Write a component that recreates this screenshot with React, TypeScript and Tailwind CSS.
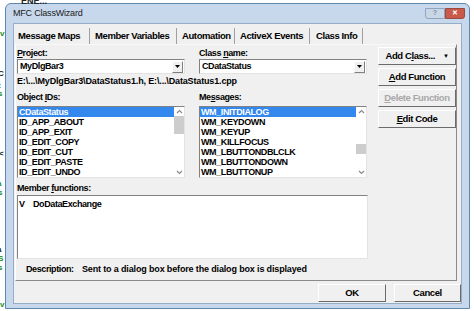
import React from "react";

const font = "font-['Liberation_Sans',Arial,sans-serif]";

const objectIds = ["CDataStatus", "ID_APP_ABOUT", "ID_APP_EXIT", "ID_EDIT_COPY", "ID_EDIT_CUT", "ID_EDIT_PASTE", "ID_EDIT_UNDO"];
const messages = ["WM_INITDIALOG", "WM_KEYDOWN", "WM_KEYUP", "WM_KILLFOCUS", "WM_LBUTTONDBLCLK", "WM_LBUTTONDOWN", "WM_LBUTTONUP"];

const Chevron = ({ up }: { up?: boolean }) => (
  <svg width="7" height="5" viewBox="0 0 7 5">
    <polyline points={up ? "1,4 3.5,1.5 6,4" : "1,1 3.5,3.5 6,1"} fill="none" stroke="#8a8a8a" strokeWidth="1.2" />
  </svg>
);

const ListBox = ({ items, thumbTop, thumbH }: { items: string[]; thumbTop: number; thumbH: number }) => (
  <div className="h-[72px] flex bg-white border border-t-[#828282] border-l-[#828282] border-r-[#e3e3e3] border-b-[#e3e3e3]">
    <div className="flex-1 flex flex-col">
      {items.map((it, i) => (
        <div
          key={it}
          className={`h-[10px] leading-[10px] pl-[1px] text-[9px] tracking-[-0.4px] font-bold whitespace-nowrap ${i === 0 ? "bg-[#3388ee] text-white" : "text-black"}`}
        >
          {it}
        </div>
      ))}
    </div>
    <div className="w-[10px] flex flex-col items-center bg-white">
      <div className="h-[9px] flex items-center justify-center">
        <Chevron up />
      </div>
      <div className="flex-1 w-full flex flex-col">
        <div style={{ height: thumbTop }} />
        <div className="w-full bg-[#cdcdcd]" style={{ height: thumbH }} />
      </div>
      <div className="h-[9px] flex items-center justify-center">
        <Chevron />
      </div>
    </div>
  </div>
);

const Combo = ({ value }: { value: string }) => (
  <div className="h-[15px] flex items-center bg-white border border-t-[#828282] border-l-[#828282] border-r-[#e3e3e3] border-b-[#e3e3e3]">
    <div className="flex-1 pl-[2px] text-[9px] tracking-[-0.4px] font-bold leading-[13px] text-black whitespace-nowrap">{value}</div>
    <div className="w-[11px] h-[12px] mr-[1px] flex items-center justify-center border border-t-white border-l-white border-r-[#808080] border-b-[#808080] bg-[#f0f0f0]">
      <svg width="5" height="3" viewBox="0 0 5 3">
        <polygon points="0,0 5,0 2.5,3" fill="#000" />
      </svg>
    </div>
  </div>
);

const Btn = ({ children, disabled }: { children: React.ReactNode; disabled?: boolean }) => (
  <div
    className={`h-[18px] flex items-center justify-center whitespace-nowrap text-[9.5px] tracking-[-0.4px] font-bold border border-t-white border-l-white border-r-[#6b6b6b] border-b-[#6b6b6b] bg-[#f0f0f0] ${disabled ? "text-[#a8a8a8]" : "text-black"}`}
  >
    {children}
  </div>
);

const Label = ({ children, className = "" }: { children: React.ReactNode; className?: string }) => (
  <div className={`h-[11px] leading-[11px] text-[9px] tracking-[-0.4px] font-bold text-black whitespace-nowrap ${className}`}>{children}</div>
);

export default function App() {
  return (
    <div className={`w-[474px] h-[311px] bg-white flex overflow-hidden relative ${font}`}>
      {/* editor text peeking out behind the dialog */}
      <div className="w-[5px] relative overflow-hidden text-[8px] font-bold leading-[8px]">
        <span className="absolute left-[0px] top-[30px] text-[#1f8a1f]">v</span>
        <span className="absolute left-[-2px] top-[70px] text-[#222]">C</span>
        <span className="absolute left-[-2px] top-[82px] text-[#1f8a1f]">t</span>
        <span className="absolute left-[-2px] top-[90px] text-[#1f8a1f]">s</span>
        <span className="absolute left-[-1px] top-[150px] text-[#222]">&lt;</span>
        <span className="absolute left-[-3px] top-[180px] text-[#1f8a1f]">a</span>
        <span className="absolute left-[-2px] top-[189px] text-[#1f8a1f]">s</span>
        <span className="absolute left-[-3px] top-[246px] text-[#222]">a</span>
        <span className="absolute left-[-2px] top-[255px] text-[#1f8a1f]">S</span>
        <span className="absolute left-[-2px] top-[264px] text-[#1f8a1f]">s</span>
        <span className="absolute left-[0px] top-[301px] text-[#1f8a1f]">v</span>
      </div>

      <div className="relative w-[465px]">
        <span className="absolute left-[16px] top-[-5px] text-[9px] font-bold text-[#222]">ENE...</span>
        <div className="mt-[3px] h-[306px] flex flex-col rounded-t-[6px] border border-[#5f86ad] bg-[#c7d8ec] px-[7px] pb-[4px]">
          {/* title bar */}
          <div className="h-[19px] flex items-center">
            <div className="flex-1 text-[9px] tracking-[-0.2px] text-[#1a1a1a]">MFC ClassWizard</div>
            <div className="w-[20px] h-[11px] flex items-center justify-center rounded-bl-[3px] border border-[#8ea4bf] bg-[#c9d6e6] text-[7px] font-bold text-[#7d8ea5]">
              ?
            </div>
            <div className="w-[20px] h-[11px] mr-[-3px] flex items-center justify-center rounded-br-[3px] border border-[#9b4a3d] bg-[#c9594a] text-[7px] font-bold text-white">
              ✕
            </div>
          </div>

          {/* client area */}
          <div className="flex-1 flex flex-col bg-[#f0f0f0] border border-[#97acc6]">
            {/* tabs */}
            <div className="h-[20px] flex items-end text-[9.5px] tracking-[-0.4px] font-bold text-black whitespace-nowrap">
              <div className="w-[76px] h-[16px] pl-[4px] leading-[16px] border-r border-[#a0a0a0]">Message Maps</div>
              <div className="w-[87px] h-[16px] pl-[5px] leading-[16px] border-r border-[#a0a0a0]">Member Variables</div>
              <div className="w-[58px] h-[16px] pl-[5px] leading-[16px] border-r border-[#a0a0a0]">Automation</div>
              <div className="w-[75px] h-[16px] pl-[5px] leading-[16px] border-r border-[#a0a0a0]">ActiveX Events</div>
              <div className="w-[53px] h-[16px] pl-[6px] leading-[16px] border-r border-[#a0a0a0]">Class Info</div>
            </div>

            {/* tab page */}
            <div className="ml-[1px] mr-[4px] h-[237px] flex border-l border-l-white border-r border-r-[#8a8a8a] border-b border-b-[#8a8a8a] border-t border-t-[#f8f8f8]">
              <div className="w-[351px] ml-[1px] flex flex-col pt-[3px]">
                <div className="grid grid-cols-[168px_168px] gap-x-[14px]">
                  <div>
                    <Label>
                      <u>P</u>roject:
                    </Label>
                    <Combo value="MyDlgBar3" />
                  </div>
                  <div>
                    <Label>
                      Class <u>n</u>ame:
                    </Label>
                    <Combo value="CDataStatus" />
                  </div>
                </div>
                <div className="mt-[2px] h-[11px] leading-[11px] text-[9px] tracking-[-0.15px] font-bold text-black whitespace-nowrap">
                  E:\...\MyDlgBar3\DataStatus1.h, E:\...\DataStatus1.cpp
                </div>
                <div className="mt-[5px] grid grid-cols-[168px_168px] gap-x-[14px]">
                  <div>
                    <Label className="mb-[3px]">
                      Object <u>I</u>Ds:
                    </Label>
                    <ListBox items={objectIds} thumbTop={0} thumbH={18} />
                  </div>
                  <div>
                    <Label className="mb-[3px]">
                      Me<u>s</u>sages:
                    </Label>
                    <ListBox items={messages} thumbTop={28} thumbH={10} />
                  </div>
                </div>
                <Label className="mt-[5px] mb-[1px]">
                  Member <u>f</u>unctions:
                </Label>
                <div className="h-[64px] bg-white border border-t-[#828282] border-l-[#828282] border-r-[#e3e3e3] border-b-[#e3e3e3] pt-[3px]">
                  <div className="h-[10px] leading-[10px] flex text-[9px] tracking-[-0.4px] font-bold text-black whitespace-nowrap">
                    <span className="w-[15px] pl-[1px]">V</span>
                    <span>DoDataExchange</span>
                  </div>
                </div>
                <div className="mt-[5px] h-[11px] leading-[11px] flex text-[9px] font-bold text-black whitespace-nowrap">
                  <span className="w-[65px] pl-[9px] tracking-[-0.4px]">Description:</span>
                  <span className="tracking-[-0.15px]">Sent to a dialog box before the dialog box is displayed</span>
                </div>
              </div>

              {/* right buttons */}
              <div className="w-[78px] ml-[10px] flex flex-col gap-[3px] pt-[2px]">
                <Btn>
                  <span>
                    Add C<u>l</u>ass...
                  </span>
                  <span className="ml-[8px] text-[6px]">▼</span>
                </Btn>
                <Btn>
                  <span>
                    <u>A</u>dd Function
                  </span>
                </Btn>
                <Btn disabled>
                  <span>
                    <u>D</u>elete Function
                  </span>
                </Btn>
                <Btn>
                  <span>
                    <u>E</u>dit Code
                  </span>
                </Btn>
              </div>
            </div>

            {/* OK / Cancel */}
            <div className="flex-1 flex items-end justify-end gap-[8px] pb-[1px]">
              <div className="w-[68px]">
                <Btn>OK</Btn>
              </div>
              <div className="w-[67px]">
                <Btn>Cancel</Btn>
              </div>
            </div>
          </div>
        </div>
      </div>
    </div>
  );
}
